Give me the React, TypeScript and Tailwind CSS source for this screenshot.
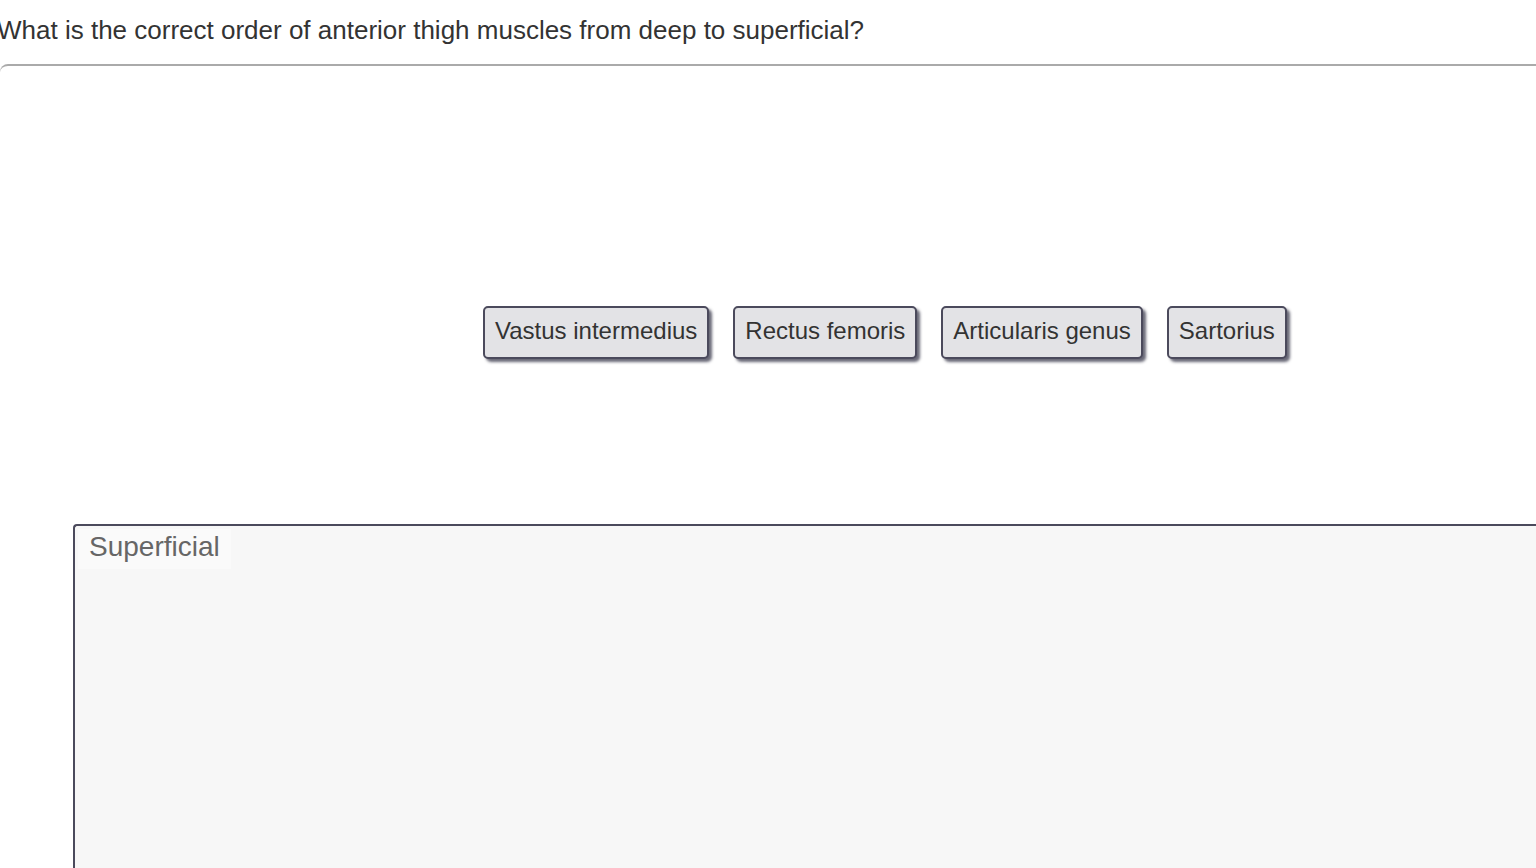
const choices = ["Vastus intermedius", "Rectus femoris", "Articularis genus", "Sartorius"];

export default function App() {
  return (
    <div
      className="w-[1536px] h-[868px] overflow-hidden bg-white text-[#333]"
      style={{ fontFamily: '"Liberation Sans", Arial, sans-serif' }}
    >
      <div className="-ml-[3px] w-[1800px]">
        <p className="pt-[15px] text-[26px] leading-[30px] whitespace-nowrap">
          What is the correct order of anterior thigh muscles from deep to superficial?
        </p>

        {/* Answer bank */}
        <div className="mt-[19px] ml-[3px] h-[460px] rounded-tl-[8px] border-t-2 border-[#aaa] flex items-start pl-[483px] pt-[240px] gap-[24px]">
          {choices.map((c) => (
            <div
              key={c}
              className="h-[53px] px-[10px] pb-[3px] flex items-center rounded-[5px] border-2 border-[#4b4a5c] bg-[#e3e3e6] text-[24px] text-[#333] whitespace-nowrap shadow-[3px_3px_3px_rgba(40,40,60,0.7)]"
            >
              {c}
            </div>
          ))}
        </div>

        {/* Drop target */}
        <div className="ml-[76px] h-[400px] rounded-tl-[4px] border-t-2 border-l-2 border-[#4b4a5c] bg-[#f7f7f7] p-[3px]">
          <div className="inline-block bg-[#fafafa] px-[11px] h-[40px] text-[28px] leading-[36px] text-[#666]">
            Superficial
          </div>
        </div>
      </div>
    </div>
  );
}
